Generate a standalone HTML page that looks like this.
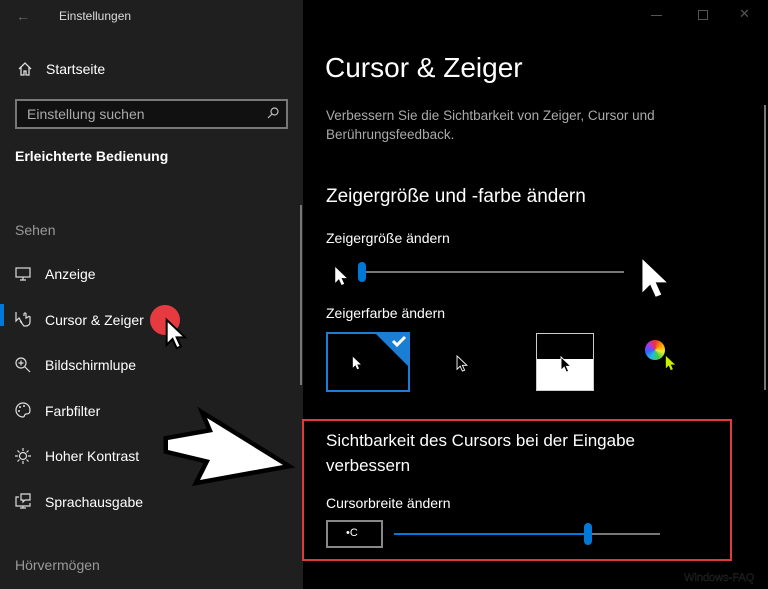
<!DOCTYPE html>
<html><head><meta charset="utf-8"><style>
*{margin:0;padding:0;box-sizing:border-box}
body{width:768px;height:589px;overflow:hidden;background:#000;font-family:"Liberation Sans",sans-serif;position:relative;color:#fff}
.a{position:absolute;white-space:nowrap}
#side{position:absolute;left:0;top:0;width:303px;height:589px;background:#1f1f1f}
.nav{font-size:14px;color:#fff}
svg{position:absolute;overflow:visible}
</style></head><body>
<div id="side">
<div class="a" style="left:16px;top:8px;color:#666;font-size:14px">&#8592;</div>
<div class="a" style="left:59px;top:9px;font-size:12px;color:#ddd">Einstellungen</div>
<svg style="left:17px;top:61px" width="16" height="16" viewBox="0 0 16 16"><path d="M2 8 L8 2 L14 8 M4 6 V14 H7 V10 H9 V14 H12 V6" fill="none" stroke="#ddd" stroke-width="1.3"/></svg>
<div class="a nav" style="left:46px;top:61px">Startseite</div>
<div class="a" style="left:15px;top:99px;width:273px;height:30px;border:2px solid #777;background:#111"></div>
<div class="a" style="left:27px;top:106px;font-size:14px;color:#aaa">Einstellung suchen</div>
<svg style="left:267px;top:107px" width="12" height="12" viewBox="0 0 12 12"><circle cx="7.5" cy="4.5" r="3.5" fill="none" stroke="#bbb" stroke-width="1.2"/><path d="M5 7 L1 11" stroke="#bbb" stroke-width="1.2"/></svg>
<div class="a" style="left:15px;top:148px;font-size:14px;font-weight:bold">Erleichterte Bedienung</div>
<div class="a" style="left:15px;top:222px;font-size:14px;color:#999">Sehen</div>
<svg style="left:15px;top:267px" width="16" height="14" viewBox="0 0 16 14"><rect x="1" y="1" width="14" height="9" fill="none" stroke="#ddd" stroke-width="1.2"/><path d="M8 10 V13 M5 13 H11" stroke="#ddd" stroke-width="1.2"/></svg>
<div class="a nav" style="left:45px;top:266px">Anzeige</div>
<div class="a" style="left:0;top:304px;width:4px;height:22px;background:#0078d7"></div>
<svg style="left:15px;top:311px" width="16" height="16" viewBox="0 0 16 16"><path d="M1 1 L1 10 L4 7 L7 12 M9 5 V3 a1 1 0 0 1 2 0 V7 l2 -1 a1 1 0 0 1 2 1 V11 a4 4 0 0 1 -4 4 H9 L5 10" fill="none" stroke="#ddd" stroke-width="1.2"/></svg>
<div class="a nav" style="left:45px;top:312px">Cursor &amp; Zeiger</div>
<svg style="left:15px;top:357px" width="16" height="16" viewBox="0 0 16 16"><circle cx="6" cy="6" r="5" fill="none" stroke="#ddd" stroke-width="1.2"/><path d="M10 10 L15 15 M6 3.5 V8.5 M3.5 6 H8.5" stroke="#ddd" stroke-width="1.2"/></svg>
<div class="a nav" style="left:45px;top:357px">Bildschirmlupe</div>
<svg style="left:15px;top:402px" width="16" height="16" viewBox="0 0 16 16"><path d="M8 1 a7 7 0 1 0 0 14 c2 0 1 -3 3 -3 c3 0 4 -1 4 -4 a7 7 0 0 0 -7 -7z" fill="none" stroke="#ddd" stroke-width="1.2"/><circle cx="5" cy="5" r="1" fill="#ddd"/><circle cx="9" cy="4" r="1" fill="#ddd"/><circle cx="4" cy="9" r="1" fill="#ddd"/></svg>
<div class="a nav" style="left:45px;top:403px">Farbfilter</div>
<svg style="left:15px;top:448px" width="16" height="16" viewBox="0 0 16 16"><circle cx="8" cy="8" r="3.5" fill="none" stroke="#ddd" stroke-width="1.2"/><path d="M8 0 V3 M8 13 V16 M0 8 H3 M13 8 H16 M2.5 2.5 L4.5 4.5 M11.5 11.5 L13.5 13.5 M2.5 13.5 L4.5 11.5 M11.5 4.5 L13.5 2.5" stroke="#ddd" stroke-width="1.2"/></svg>
<div class="a nav" style="left:45px;top:448px">Hoher Kontrast</div>
<svg style="left:15px;top:493px" width="16" height="16" viewBox="0 0 16 16"><path d="M4 4 H1 V13 H15 V10 M8 13 V15 M5 15 H11" fill="none" stroke="#ddd" stroke-width="1.2"/><path d="M6 1 H15 V7 H10 L8 9 V7 H6z" fill="none" stroke="#ddd" stroke-width="1.2"/></svg>
<div class="a nav" style="left:45px;top:494px">Sprachausgabe</div>
<div class="a" style="left:15px;top:557px;font-size:14px;color:#999">Hörvermögen</div>
<div class="a" style="left:300px;top:205px;width:2px;height:180px;background:#777"></div>
</div>
<div class="a" style="left:150px;top:305px;width:30px;height:30px;border-radius:50%;background:#e53a40"></div>
<svg style="left:165px;top:318px" width="20" height="32" viewBox="0 0 12 19"><path d="M1 1 V16 L4.5 12.5 L7 18 L9.5 17 L7 11.5 H12z" fill="#fff" stroke="#000" stroke-width="1.2"/></svg>
<svg style="left:0;top:0" width="768" height="589"><polygon points="168,440 213,432 207,418 283,465 200,480 210,460 168,450" fill="#fff" stroke="#000" stroke-width="9" stroke-linejoin="miter"/><polygon points="168,440 213,432 207,418 283,465 200,480 210,460 168,450" fill="#fff"/></svg>

<div class="a" style="left:651px;top:15px;width:11px;height:1px;background:#555"></div>
<div class="a" style="left:698px;top:10px;width:10px;height:10px;border:1px solid #555"></div>
<div class="a" style="left:739px;top:6px;font-size:13px;color:#555">&#x2715;</div>
<div class="a" style="left:325px;top:52px;font-size:28px;color:#fff">Cursor &amp; Zeiger</div>
<div class="a" style="left:326px;top:106px;font-size:13.5px;color:#aaa;line-height:19px">Verbessern Sie die Sichtbarkeit von Zeiger, Cursor und<br>Berührungsfeedback.</div>
<div class="a" style="left:326px;top:186px;font-size:19px">Zeigergröße und -farbe ändern</div>
<div class="a" style="left:326px;top:230px;font-size:14px">Zeigergröße ändern</div>
<div class="a" style="left:764px;top:105px;width:2px;height:285px;background:#777"></div>
<svg style="left:334px;top:266px" width="13" height="20" viewBox="0 0 12 19"><path d="M1 1 V16 L4.5 12.5 L7 18 L9.5 17 L7 11.5 H12z" fill="#fff"/></svg>
<div class="a" style="left:364px;top:271px;width:260px;height:2px;background:#777"></div>
<div class="a" style="left:358px;top:262px;width:8px;height:20px;border-radius:4px;background:#0078d7"></div>
<svg style="left:640px;top:257px" width="27" height="42" viewBox="0 0 12 19"><path d="M1 1 V16 L4.5 12.5 L7 18 L9.5 17 L7 11.5 H12z" fill="#fff"/></svg>
<div class="a" style="left:326px;top:305px;font-size:14px">Zeigerfarbe ändern</div>
<div class="a" style="left:326px;top:332px;width:84px;height:60px;border:2px solid #1a7fd4"></div>
<svg style="left:374px;top:332px" width="35" height="35"><polygon points="0,0 35,0 35,35" fill="#1a7fd4"/><path d="M19 9 L23 13 L31 5" fill="none" stroke="#fff" stroke-width="3"/></svg>
<svg style="left:352px;top:356px" width="9" height="14" viewBox="0 0 12 19"><path d="M1 1 V16 L4.5 12.5 L7 18 L9.5 17 L7 11.5 H12z" fill="#fff"/></svg>
<svg style="left:456px;top:355px" width="11" height="17" viewBox="0 0 12 19"><path d="M1 1 V16 L4.5 12.5 L7 18 L9.5 17 L7 11.5 H12z" fill="#000" stroke="#fff" stroke-width="1"/></svg>
<div class="a" style="left:536px;top:333px;width:58px;height:58px;border:1px solid #ccc;background:linear-gradient(#000 0,#000 45%,#fff 45%)"></div>
<svg style="left:560px;top:356px" width="11" height="17" viewBox="0 0 12 19"><path d="M1 1 V16 L4.5 12.5 L7 18 L9.5 17 L7 11.5 H12z" fill="#000" stroke="#fff" stroke-width="1"/></svg>
<div class="a" style="left:645px;top:340px;width:20px;height:20px;border-radius:50%;background:conic-gradient(#e33,#f90,#ee3,#4c4,#2bd,#36f,#a3e,#e33)"></div>
<svg style="left:665px;top:355px" width="10" height="16" viewBox="0 0 12 19"><path d="M1 1 V16 L4.5 12.5 L7 18 L9.5 17 L7 11.5 H12z" fill="#c8f000"/></svg>
<div class="a" style="left:302px;top:419px;width:430px;height:142px;border:2px solid #e0393e"></div>
<div class="a" style="left:326px;top:428px;font-size:17px;line-height:25px;color:#fff">Sichtbarkeit des Cursors bei der Eingabe<br>verbessern</div>
<div class="a" style="left:326px;top:495px;font-size:14px">Cursorbreite ändern</div>
<div class="a" style="left:326px;top:520px;width:57px;height:28px;border:2px solid #888"></div>
<div class="a" style="left:346px;top:527px;font-size:11px">&#x2022;C</div>
<div class="a" style="left:394px;top:533px;width:195px;height:2px;background:#0078d7"></div>
<div class="a" style="left:589px;top:533px;width:71px;height:2px;background:#777"></div>
<div class="a" style="left:584px;top:523px;width:8px;height:22px;border-radius:4px;background:#0078d7"></div>
<div class="a" style="left:684px;top:572px;font-size:11px;color:#0a0a0a;-webkit-text-stroke:0.4px #2a2a2a">Windows-FAQ</div>
</body></html>
